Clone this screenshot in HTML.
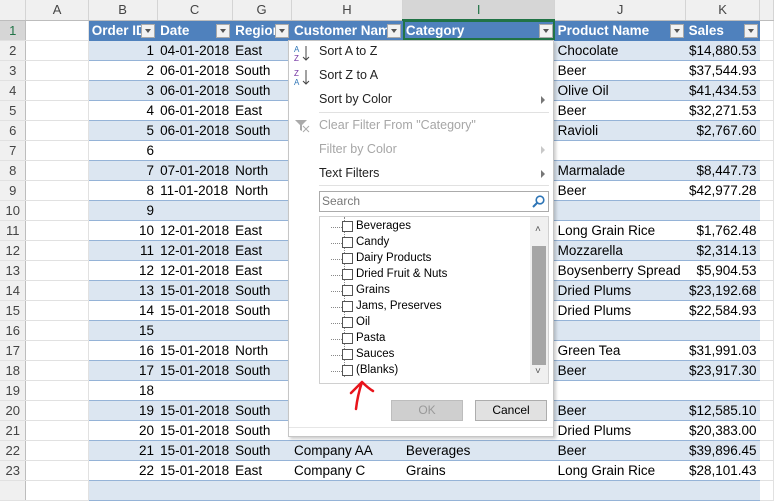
<!DOCTYPE html>
<html><head><meta charset="utf-8"><style>
*{box-sizing:border-box;margin:0;padding:0}
body{width:774px;height:483px;overflow:hidden;background:#fff;font-family:"Liberation Sans",sans-serif;font-size:13.5px;color:#000;position:relative}
table{border-collapse:collapse;table-layout:fixed;position:absolute;left:0;top:0}
td{height:20px;padding:0 3px;white-space:nowrap;overflow:hidden;border-right:1px solid #e1e1e1;border-bottom:1px solid #e1e1e1}
tr.ch td{background:#f0f0f0;color:#444;text-align:center;border-right:1px solid #d4d4d4;border-bottom:1px solid #bdbdbd;font-size:13px}
td.h{background:#f0f0f0;color:#444;text-align:center;border-right:1px solid #bdbdbd;font-size:13px}
td.r{text-align:right}
tr td.t{border-right:none;border-bottom:1px solid #95b3d7}
tr.b td.t{background:#dce6f1}
tr.hd td.t{background:#4f81bd;color:#fff;font-weight:bold;border-bottom:1px solid #4f81bd;position:relative}
tr.hd td.t span.dd{position:absolute;right:2px;top:3px;width:14px;height:14px;background:#f2f2f2;border:1px solid #aaa}
tr.hd td.t span.dd:after{content:"";position:absolute;left:3px;top:4px;border-left:3.5px solid transparent;border-right:3.5px solid transparent;border-top:4px solid #555}
td.lb{border-left:1px solid #95b3d7}
td.rb{border-right:1px solid #95b3d7}
#menu{position:absolute;left:288px;top:40px;width:266px;height:397px;background:#fff;border:1px solid #c6c6c6;box-shadow:2px 2px 3px rgba(0,0,0,.2);font-size:12.5px}
.mi{position:absolute;left:30px;color:#222}
.dis{color:#a6a6a6}
.sep{position:absolute;left:30px;right:4px;height:1px;background:#e1e1e1}
.arr{position:absolute;right:8px;width:0;height:0;border-top:4px solid transparent;border-bottom:4px solid transparent;border-left:4px solid #777}
.cb{position:absolute;left:53px;width:11px;height:11px;border:1px solid #555;background:#fff}
.cl{position:absolute;left:67px;font-size:11.5px;color:#000}
.dot{position:absolute;left:42px;width:11px;border-top:1px dotted #888}
</style></head><body>
<table>
<colgroup><col style="width:26px"><col style="width:63px"><col style="width:69px"><col style="width:73px"><col style="width:59px"><col style="width:112px"><col style="width:153px"><col style="width:131px"><col style="width:74px"><col style="width:14px"></colgroup>
<tr class="ch"><td style="background:#f0f0f0"></td><td>A</td><td>B</td><td>C</td><td>G</td><td>H</td><td style="background:#d6d6d6;color:#217346;border-bottom:2px solid #217346">I</td><td>J</td><td>K</td><td></td></tr>
<tr class="hd"><td class="h" style="color:#217346;background:#d6d6d6">1</td><td></td><td class="t">Order ID<span class="dd"></span></td><td class="t">Date<span class="dd"></span></td><td class="t">Region<span class="dd"></span></td><td class="t">Customer Nam<span class="dd"></span></td><td class="t" style="outline:2px solid #217346;outline-offset:-2px">Category<span class="dd"></span></td><td class="t">Product Name<span class="dd"></span></td><td class="t">Sales<span class="dd"></span></td><td></td></tr>
<tr class="b"><td class="h">2</td><td></td><td class="t r lb">1</td><td class="t">04-01-2018</td><td class="t">East</td><td class="t"></td><td class="t"></td><td class="t">Chocolate</td><td class="t r rb">$14,880.53</td><td></td></tr>
<tr><td class="h">3</td><td></td><td class="t r lb">2</td><td class="t">06-01-2018</td><td class="t">South</td><td class="t"></td><td class="t"></td><td class="t">Beer</td><td class="t r rb">$37,544.93</td><td></td></tr>
<tr class="b"><td class="h">4</td><td></td><td class="t r lb">3</td><td class="t">06-01-2018</td><td class="t">South</td><td class="t"></td><td class="t"></td><td class="t">Olive Oil</td><td class="t r rb">$41,434.53</td><td></td></tr>
<tr><td class="h">5</td><td></td><td class="t r lb">4</td><td class="t">06-01-2018</td><td class="t">East</td><td class="t"></td><td class="t"></td><td class="t">Beer</td><td class="t r rb">$32,271.53</td><td></td></tr>
<tr class="b"><td class="h">6</td><td></td><td class="t r lb">5</td><td class="t">06-01-2018</td><td class="t">South</td><td class="t"></td><td class="t"></td><td class="t">Ravioli</td><td class="t r rb">$2,767.60</td><td></td></tr>
<tr><td class="h">7</td><td></td><td class="t r lb">6</td><td class="t"></td><td class="t"></td><td class="t"></td><td class="t"></td><td class="t"></td><td class="t r rb"></td><td></td></tr>
<tr class="b"><td class="h">8</td><td></td><td class="t r lb">7</td><td class="t">07-01-2018</td><td class="t">North</td><td class="t"></td><td class="t"></td><td class="t">Marmalade</td><td class="t r rb">$8,447.73</td><td></td></tr>
<tr><td class="h">9</td><td></td><td class="t r lb">8</td><td class="t">11-01-2018</td><td class="t">North</td><td class="t"></td><td class="t"></td><td class="t">Beer</td><td class="t r rb">$42,977.28</td><td></td></tr>
<tr class="b"><td class="h">10</td><td></td><td class="t r lb">9</td><td class="t"></td><td class="t"></td><td class="t"></td><td class="t"></td><td class="t"></td><td class="t r rb"></td><td></td></tr>
<tr><td class="h">11</td><td></td><td class="t r lb">10</td><td class="t">12-01-2018</td><td class="t">East</td><td class="t"></td><td class="t"></td><td class="t">Long Grain Rice</td><td class="t r rb">$1,762.48</td><td></td></tr>
<tr class="b"><td class="h">12</td><td></td><td class="t r lb">11</td><td class="t">12-01-2018</td><td class="t">East</td><td class="t"></td><td class="t"></td><td class="t">Mozzarella</td><td class="t r rb">$2,314.13</td><td></td></tr>
<tr><td class="h">13</td><td></td><td class="t r lb">12</td><td class="t">12-01-2018</td><td class="t">East</td><td class="t"></td><td class="t"></td><td class="t">Boysenberry Spread</td><td class="t r rb">$5,904.53</td><td></td></tr>
<tr class="b"><td class="h">14</td><td></td><td class="t r lb">13</td><td class="t">15-01-2018</td><td class="t">South</td><td class="t"></td><td class="t"></td><td class="t">Dried Plums</td><td class="t r rb">$23,192.68</td><td></td></tr>
<tr><td class="h">15</td><td></td><td class="t r lb">14</td><td class="t">15-01-2018</td><td class="t">South</td><td class="t"></td><td class="t"></td><td class="t">Dried Plums</td><td class="t r rb">$22,584.93</td><td></td></tr>
<tr class="b"><td class="h">16</td><td></td><td class="t r lb">15</td><td class="t"></td><td class="t"></td><td class="t"></td><td class="t"></td><td class="t"></td><td class="t r rb"></td><td></td></tr>
<tr><td class="h">17</td><td></td><td class="t r lb">16</td><td class="t">15-01-2018</td><td class="t">North</td><td class="t"></td><td class="t"></td><td class="t">Green Tea</td><td class="t r rb">$31,991.03</td><td></td></tr>
<tr class="b"><td class="h">18</td><td></td><td class="t r lb">17</td><td class="t">15-01-2018</td><td class="t">South</td><td class="t"></td><td class="t"></td><td class="t">Beer</td><td class="t r rb">$23,917.30</td><td></td></tr>
<tr><td class="h">19</td><td></td><td class="t r lb">18</td><td class="t"></td><td class="t"></td><td class="t"></td><td class="t"></td><td class="t"></td><td class="t r rb"></td><td></td></tr>
<tr class="b"><td class="h">20</td><td></td><td class="t r lb">19</td><td class="t">15-01-2018</td><td class="t">South</td><td class="t"></td><td class="t"></td><td class="t">Beer</td><td class="t r rb">$12,585.10</td><td></td></tr>
<tr><td class="h">21</td><td></td><td class="t r lb">20</td><td class="t">15-01-2018</td><td class="t">South</td><td class="t"></td><td class="t"></td><td class="t">Dried Plums</td><td class="t r rb">$20,383.00</td><td></td></tr>
<tr class="b"><td class="h">22</td><td></td><td class="t r lb">21</td><td class="t">15-01-2018</td><td class="t">South</td><td class="t">Company AA</td><td class="t">Beverages</td><td class="t">Beer</td><td class="t r rb">$39,896.45</td><td></td></tr>
<tr><td class="h">23</td><td></td><td class="t r lb">22</td><td class="t">15-01-2018</td><td class="t">East</td><td class="t">Company C</td><td class="t">Grains</td><td class="t">Long Grain Rice</td><td class="t r rb">$28,101.43</td><td></td></tr>
<tr class="b"><td class="h"></td><td></td><td class="t lb"></td><td class="t"></td><td class="t"></td><td class="t"></td><td class="t"></td><td class="t"></td><td class="t rb"></td><td></td></tr>
</table>

<div id="menu">
<svg style="position:absolute;left:4px;top:2px" width="20" height="70" viewBox="0 0 20 70">
<text x="1" y="9" font-size="8" fill="#2e75b6" font-family="Liberation Sans">A</text>
<text x="1" y="18" font-size="8" fill="#7030a0" font-family="Liberation Sans">Z</text>
<path d="M13 3v14M10 14l3 3 3-3" stroke="#444" fill="none"/>
<text x="1" y="33" font-size="8" fill="#7030a0" font-family="Liberation Sans">Z</text>
<text x="1" y="42" font-size="8" fill="#2e75b6" font-family="Liberation Sans">A</text>
<path d="M13 27v14M10 38l3 3 3-3" stroke="#444" fill="none"/>
</svg>
<div class="mi" style="top:3px">Sort A to Z</div>
<div class="mi" style="top:27px">Sort Z to A</div>
<div class="mi" style="top:51px">Sort by Color</div><div class="arr" style="top:55px"></div>
<div class="sep" style="top:71px"></div>
<svg style="position:absolute;left:5px;top:77px" width="18" height="16"><path d="M1 2h12l-5 5v6l-2-1V7z" fill="#aaa"/><path d="M9 8l6 6M15 8l-6 6" stroke="#aaa"/></svg>
<div class="mi dis" style="top:77px">Clear Filter From "Category"</div>
<div class="mi dis" style="top:101px">Filter by Color</div><div class="arr" style="top:105px;border-left-color:#c8c8c8"></div>
<div class="mi" style="top:125px">Text Filters</div><div class="arr" style="top:129px"></div>
<div class="sep" style="top:144px"></div>
<div style="position:absolute;left:30px;top:150px;width:230px;height:21px;border:1px solid #ababab;color:#777;padding:2px 2px;font-size:12px">Search
<svg style="position:absolute;right:3px;top:3px" width="13" height="13"><circle cx="8" cy="5" r="3.8" stroke="#2e75b6" stroke-width="1.6" fill="none"/><path d="M5 8l-4 4" stroke="#2e75b6" stroke-width="2"/></svg></div>
<div style="position:absolute;left:30px;top:175px;width:230px;height:168px;border:1px solid #d0d0d0">
<div style="position:absolute;left:24px;top:0;height:160px;border-left:1px dotted #888"></div>
</div>
<div style="position:absolute;left:241px;top:176px;width:18px;height:166px;background:#f0f0f0"></div>
<div style="position:absolute;left:243px;top:205px;width:14px;height:119px;background:#a6a6a6"></div>
<div style="position:absolute;left:246px;top:183px;font-size:10px;color:#555">&#708;</div>
<div style="position:absolute;left:246px;top:325px;font-size:10px;color:#555">&#709;</div>
<div class="dot" style="top:186px"></div><div class="cb" style="top:180px"></div><div class="cl" style="top:179px">Beverages</div>
<div class="dot" style="top:202px"></div><div class="cb" style="top:196px"></div><div class="cl" style="top:195px">Candy</div>
<div class="dot" style="top:218px"></div><div class="cb" style="top:212px"></div><div class="cl" style="top:211px">Dairy Products</div>
<div class="dot" style="top:234px"></div><div class="cb" style="top:228px"></div><div class="cl" style="top:227px">Dried Fruit &amp; Nuts</div>
<div class="dot" style="top:250px"></div><div class="cb" style="top:244px"></div><div class="cl" style="top:243px">Grains</div>
<div class="dot" style="top:266px"></div><div class="cb" style="top:260px"></div><div class="cl" style="top:259px">Jams, Preserves</div>
<div class="dot" style="top:282px"></div><div class="cb" style="top:276px"></div><div class="cl" style="top:275px">Oil</div>
<div class="dot" style="top:298px"></div><div class="cb" style="top:292px"></div><div class="cl" style="top:291px">Pasta</div>
<div class="dot" style="top:314px"></div><div class="cb" style="top:308px"></div><div class="cl" style="top:307px">Sauces</div>
<div class="dot" style="top:330px"></div><div class="cb" style="top:324px"></div><div class="cl" style="top:323px">(Blanks)</div>
<svg style="position:absolute;left:55px;top:336px" width="40" height="40"><path d="M12 32c1-9 3-18 6-27M7 16c4-4 8-8 11-11c3 3 6 6 11 9" stroke="#e8141b" stroke-width="2.5" fill="none" stroke-linecap="round" stroke-linejoin="round"/></svg>
<div style="position:absolute;left:102px;top:359px;width:72px;height:21px;background:#cfcfcf;border:1px solid #bdbdbd;color:#999;text-align:center;line-height:19px;font-size:12px">OK</div>
<div style="position:absolute;left:186px;top:359px;width:72px;height:21px;background:#e1e1e1;border:1px solid #adadad;text-align:center;line-height:19px;font-size:12px">Cancel</div>
<div style="position:absolute;left:0;right:0;top:386px;height:1px;background:#e6e6e6"></div>
</div>
</body></html>
